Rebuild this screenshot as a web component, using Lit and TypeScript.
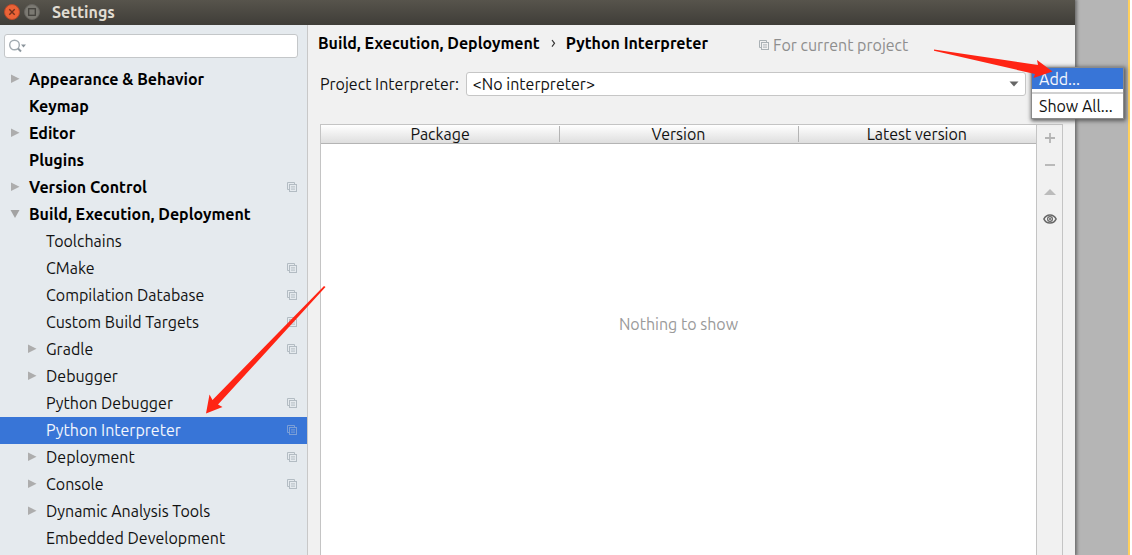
import { LitElement, html, svg, css, nothing } from "lit";
import { customElement, state } from "lit/decorators.js";
import { classMap } from "lit/directives/class-map.js";

interface Item {
  label: string;
  level: 0 | 1;
  arrow?: "closed" | "open";
  project?: boolean;
}

const ITEMS: Item[] = [
  { label: "Appearance & Behavior", level: 0, arrow: "closed" },
  { label: "Keymap", level: 0 },
  { label: "Editor", level: 0, arrow: "closed" },
  { label: "Plugins", level: 0 },
  { label: "Version Control", level: 0, arrow: "closed", project: true },
  { label: "Build, Execution, Deployment", level: 0, arrow: "open" },
  { label: "Toolchains", level: 1 },
  { label: "CMake", level: 1, project: true },
  { label: "Compilation Database", level: 1, project: true },
  { label: "Custom Build Targets", level: 1, project: true },
  { label: "Gradle", level: 1, arrow: "closed", project: true },
  { label: "Debugger", level: 1, arrow: "closed" },
  { label: "Python Debugger", level: 1, project: true },
  { label: "Python Interpreter", level: 1, project: true },
  { label: "Deployment", level: 1, arrow: "closed", project: true },
  { label: "Console", level: 1, arrow: "closed", project: true },
  { label: "Dynamic Analysis Tools", level: 1, arrow: "closed" },
  { label: "Embedded Development", level: 1 },
];

const projectIcon = html`<svg class="project" width="10" height="10" viewBox="0 0 10 10" fill="none" stroke="currentColor" aria-hidden="true">
  <path d="M2.5 7.5H.5V.5H7.5V2.5" />
  <rect x="2.5" y="2.5" width="7" height="7" />
  <path d="M4 4.9H8M4 7.1H8" />
</svg>`;

const ARROWS = {
  closed: svg`<path d="M1 0.5L9.5 4.7L1 9Z" fill="#adadad" />`,
  open: svg`<path d="M0.5 1H9.5L5 9Z" fill="#a3a3a3" />`,
};

@customElement("app-root")
export class AppRoot extends LitElement {
  @state() private selected = "Python Interpreter";

  static styles = css`
    :host {
      display: flex;
      position: relative;
      box-sizing: border-box;
      min-height: 100vh;
      background: #b5b5b5;
      color: #111;
      font: 16px/20px Ubuntu, "Noto Sans", sans-serif;
    }
    * { box-sizing: border-box; }
    button, input, select { font: inherit; color: inherit; margin: 0; }
    button { border: 0; padding: 0; background: none; }
    svg { display: block; flex: none; }

    .window {
      flex: 1;
      min-width: 0;
      display: flex;
      flex-direction: column;
      background: #f1f1f1;
      box-shadow: 1px 0 3px 1px #6e6e6e;
    }
    .desktop {
      flex: 0 0 57px;
      border-right: 2px solid #fff;
      box-shadow: inset -2px 0 #ffd05c;
    }
    .titlebar {
      height: 25px;
      display: flex;
      align-items: center;
      gap: 4px;
      padding: 0 4px 2px;
      background: linear-gradient(#57544c, #3f3d38);
      color: #e0dcd2;
    }
    .titlebar h1 { margin: 0 0 0 8px; font-size: 16px; line-height: 20px; }
    .body { flex: 1; display: flex; min-height: 0; }

    .sidebar {
      flex: 0 0 308px;
      border-right: 1px solid #c8c8c8;
      background: #e5eaee;
    }
    .search { position: relative; margin: 9px 9px 8px 4px; }
    .search input {
      display: block;
      width: 100%;
      height: 24px;
      padding: 0 6px 0 28px;
      border: 1px solid #c4c7c9;
      border-radius: 3px;
      background: #fff;
      outline: 0;
    }
    .search svg { position: absolute; left: 5px; top: 4px; }
    .tree { margin: 0; padding: 0; list-style: none; }
    .row {
      display: flex;
      align-items: center;
      height: 27px;
      padding: 0 10px 1px;
      color: #111;
      text-decoration: none;
      white-space: nowrap;
    }
    .top { font-weight: 700; color: #000; }
    .child { padding-left: 27px; }
    .twisty { width: 10px; height: 10px; margin-right: 9px; flex: none; }
    .label { flex: 1; }
    .project { color: #b3bcc3; }
    .selected { background: #3875d7; color: #f4f7fd; }
    .selected .project { color: #7c9fd6; }

    .content {
      flex: 1;
      min-width: 0;
      display: flex;
      flex-direction: column;
      padding: 8px 12px 0;
    }
    .crumbs { display: flex; align-items: center; height: 20px; font-weight: 700; color: #000; white-space: nowrap; margin-left: -2px; }
    .chevron { margin: 0 7px; }
    .scope { display: flex; align-items: center; gap: 4px; margin: 3px 0 0 51px; font-weight: 400; color: #8e8e8e; }
    .scope .project { color: #aab1b5; }

    .field { position: relative; display: flex; align-items: center; gap: 7px; margin: 18px 0 0; padding-right: 37px; height: 26px; }
    .combo { position: relative; flex: 1; }
    .combo select {
      display: block;
      appearance: none;
      width: 100%;
      height: 24px;
      padding: 0 24px 0 6px;
      border: 1px solid #c6c6c6;
      border-radius: 3px;
      background: #fff;
      outline: 0;
    }
    .combo svg { position: absolute; right: 7px; top: 9px; pointer-events: none; }

    .menu {
      position: absolute;
      z-index: 1;
      right: -61px;
      top: -4px;
      width: 93px;
      border: 1px solid #8a8a8a;
      background: #fff;
      box-shadow: 1px 1px 4px 1px #5c5c5c;
    }
    .menu button { display: block; width: 100%; text-align: left; padding: 0 7px; height: 24px; white-space: nowrap; }
    .menu .active { background: #3875d7; color: #f4f7fd; height: 21px; }
    .menu hr { margin: 3px 0 0; border: 0; height: 2px; background: #d0d0d0; }

    .panel {
      flex: 1;
      display: flex;
      margin-top: 27px;
      border: 1px solid #c4c4c4;
      border-bottom: 0;
    }
    .grid { flex: 1; display: flex; flex-direction: column; background: #fff; border-right: 1px solid #c4c4c4; }
    table { width: 100%; border-collapse: separate; border-spacing: 0; table-layout: fixed; }
    th {
      height: 19px;
      padding: 0;
      font-weight: 400;
      line-height: 18px;
      border-bottom: 1px solid #b4b4b4;
      background: linear-gradient(#fff, #dedede);
      position: relative;
    }
    th + th::before { content: ""; position: absolute; left: 0; top: 1px; bottom: 1px; width: 1px; background: #b4b4b4; }
    .empty { flex: 1; display: grid; place-items: start center; padding-top: 170px; color: #9a9a9a; margin: 0; }
    .tools { flex: 0 0 25px; display: flex; flex-direction: column; align-items: center; }
    .tools button { width: 25px; height: 27px; padding-bottom: 1px; display: grid; place-items: center; }

    .marks { position: absolute; z-index: 2; left: 0; top: 0; pointer-events: none; }
  `;

  private row(item: Item) {
    const selected = item.label === this.selected;
    return html`<li>
      <a
        href="#"
        class=${classMap({ row: true, top: item.level === 0, child: item.level === 1, selected })}
        aria-current=${selected ? "page" : nothing}
        @click=${(e: Event) => {
          e.preventDefault();
          this.selected = item.label;
        }}
      >
        <svg class="twisty" viewBox="0 0 10 10" aria-hidden="true">${item.arrow ? ARROWS[item.arrow] : nothing}</svg>
        <span class="label">${item.label}</span>
        ${item.project ? projectIcon : nothing}
      </a>
    </li>`;
  }

  render() {
    return html`
      <div class="window">
        <header class="titlebar">
          <button aria-label="Close">
            <svg width="16" height="16" viewBox="0 0 16 16">
              <circle cx="8" cy="8" r="7.5" fill="#ec6337" stroke="#b9492a" />
              <path d="M5.3 5.3L10.7 10.7M10.7 5.3L5.3 10.7" stroke="#71301c" stroke-width="1.4" />
            </svg>
          </button>
          <button aria-label="Maximize">
            <svg width="16" height="16" viewBox="0 0 16 16">
              <circle cx="8" cy="8" r="7.5" fill="#7b7972" stroke="#676560" />
              <rect x="4.7" y="4.7" width="6.6" height="6.6" fill="none" stroke="#44423d" stroke-width="1.3" />
            </svg>
          </button>
          <h1>Settings</h1>
        </header>
        <div class="body">
          <nav class="sidebar">
            <div class="search">
              <input type="text" aria-label="Search settings" />
              <svg width="18" height="16" viewBox="0 0 18 16" fill="none" aria-hidden="true">
                <circle cx="5.5" cy="7" r="4.8" stroke="#a2abb1" stroke-width="1.4" />
                <path d="M9 10.5L12 13.5" stroke="#8d979e" stroke-width="2" />
                <path d="M12 6.5H17L14.5 9.5Z" fill="#8a949b" />
              </svg>
            </div>
            <ul class="tree">${ITEMS.map((i) => this.row(i))}</ul>
          </nav>
          <main class="content">
            <div class="crumbs">
              <span>Build, Execution, Deployment</span>
              <svg class="chevron" width="12" height="12" viewBox="0 0 12 12" fill="none" stroke="#333" aria-hidden="true">
                <path d="M5 3L7.500 6.300L5 9.600" stroke-width="1.2" />
              </svg>
              <span>Python Interpreter</span>
              <span class="scope">${projectIcon} For current project</span>
            </div>
            <div class="field">
              <label for="interpreter">Project Interpreter:</label>
              <div class="combo">
                <select id="interpreter">
                  <option>&lt;No interpreter&gt;</option>
                </select>
                <svg width="10" height="6" viewBox="0 0 10 6" aria-hidden="true"><path d="M.5 .5H9.5L5 5.5Z" fill="#666" /></svg>
              </div>
              <div class="menu">
                <button class="active">Add...</button>
                <hr />
                <button>Show All...</button>
              </div>
            </div>
            <div class="panel">
              <div class="grid">
                <table>
                  <thead>
                    <tr>
                      <th scope="col">Package</th>
                      <th scope="col">Version</th>
                      <th scope="col">Latest version</th>
                    </tr>
                  </thead>
                </table>
                <p class="empty">Nothing to show</p>
              </div>
              <div class="tools">
                <button aria-label="Install">
                  <svg width="12" height="12" viewBox="0 0 12 12"><path d="M6 1V11M1 6H11" stroke="#b4b4b4" stroke-width="1.8" /></svg>
                </button>
                <button aria-label="Uninstall">
                  <svg width="12" height="12" viewBox="0 0 12 12"><path d="M1 6H11" stroke="#b4b4b4" stroke-width="1.8" /></svg>
                </button>
                <button aria-label="Upgrade">
                  <svg width="12" height="12" viewBox="0 0 12 12"><path d="M0 9H12L6 3Z" fill="#bcbcbc" /></svg>
                </button>
                <button aria-label="Show early releases">
                  <svg width="14" height="10" viewBox="0 0 14 10" fill="none" stroke="#666">
                    <path d="M.9 5C3.4 -.4 10.6 -.4 13.1 5C10.6 10.4 3.4 10.4 .9 5Z" stroke-width="1.6" />
                    <circle cx="7" cy="5" r="2.4" stroke-width="1.2" />
                    <circle cx="7" cy="5" r="1.1" fill="#666" stroke="none" />
                  </svg>
                </button>
              </div>
            </div>
          </main>
        </div>
      </div>
      <div class="desktop"></div>
      <svg class="marks" width="1132" height="555" viewBox="0 0 1132 555" fill="#ff2414" aria-hidden="true">
        <path d="M325.500 287L324 286L212.500 400L209.500 394.500L206 413.500L222.500 407L218 404.500Z" />
        <path d="M934 49.500L1038 65L1037 60L1052.500 71.500L1033.500 78L1035 74L934 50.800Z" />
      </svg>
    `;
  }
}
